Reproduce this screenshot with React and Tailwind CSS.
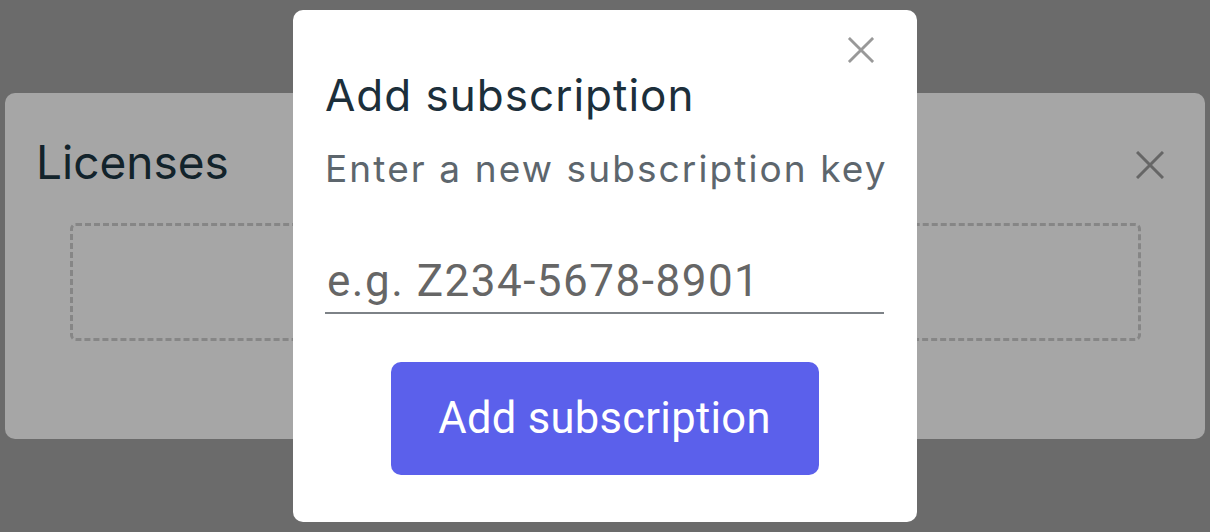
import React from "react";

function XIcon({ className, stroke = 3 }) {
  return (
    <svg viewBox="0 0 28 28" className={className} fill="none" stroke="currentColor" strokeWidth={stroke} strokeLinecap="butt">
      <path d="M1 1 L27 27 M27 1 L1 27" />
    </svg>
  );
}

export default function App() {
  return (
    <div className="relative w-[1210px] h-[532px] overflow-hidden bg-[#6b6b6b]">
      {/* Background card */}
      <div className="mt-[93px] mx-[5px] h-[346px] rounded-[10px] bg-[#a6a6a6] flex flex-col">
        <div className="flex items-start justify-between pl-[31px] pr-[41px] pt-[46px]">
          <div className="text-[46px] leading-[47px] text-[#12232b] font-['Inter',sans-serif]">Licenses</div>
          <XIcon className="w-[28px] h-[28px] mt-[12px] text-[#666666]" stroke={3} />
        </div>
        <div className="ml-[65px] mr-[64px] mt-[37px] h-[118px] rounded-[6px] border-[3px] border-dashed border-[#868686]" />
      </div>

      {/* Modal */}
      <div className="absolute left-[293px] top-[10px] w-[624px] h-[512px] rounded-[10px] bg-white pl-[32px] pr-[33px] pt-[27px] flex flex-col">
        <div className="flex justify-end pr-[9px]">
          <XIcon className="w-[28px] h-[26px] text-[#999999]" stroke={3} />
        </div>
        <div className="mt-[10px] text-[44px] leading-[44px] text-[#1c2f3b] font-['Inter',sans-serif] tracking-[1px] whitespace-nowrap">Add subscription</div>
        <div className="mt-[33px] text-[37px] leading-[38px] text-[#5d666d] font-['Inter',sans-serif] tracking-[2.1px] whitespace-nowrap">Enter a new subscription key</div>
        <div className="mt-[71px] pb-[9px] border-b-2 border-[#7d8287]">
          <div className="pl-[2px] text-[44px] leading-[44px] text-[#666666] font-['Roboto',sans-serif] tracking-[1.5px] whitespace-nowrap">e.g. Z234-5678-8901</div>
        </div>
        <div className="flex justify-center mt-[48px]">
          <button className="w-[428px] h-[113px] rounded-[10px] bg-[#5b60eb] text-white text-[43.5px] font-['Roboto',sans-serif] tracking-[0.3px] whitespace-nowrap">
            Add subscription
          </button>
        </div>
      </div>
    </div>
  );
}
